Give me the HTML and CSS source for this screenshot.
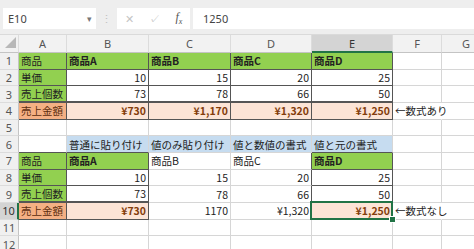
FILE: index.html
```html
<!DOCTYPE html>
<html lang="ja">
<head>
    <meta charset="UTF-8">
    <title>貼り付けの比較</title>
    <link rel="stylesheet" href="styles.css">
</head>
<body>
<div class="topbar">
    <div class="namebox"><span>E10</span><span class="caret">▾</span></div>
    <span class="dots">⋮</span>
    <div class="fbtns">
        <span class="cancel">✕</span>
        <span class="enter">✓</span>
        <span class="fx">f<sub>x</sub></span>
    </div>
    <div class="fbox">1250</div>
</div>

<div class="sheet">
    <!-- header row -->
    <div class="ch corner">
        <svg width="11" height="11" viewBox="0 0 11 11"><polygon points="11,0 11,11 0,11" fill="#b8b8b8"/></svg>
    </div>
    <div class="ch">A</div>
    <div class="ch">B</div>
    <div class="ch">C</div>
    <div class="ch">D</div>
    <div class="ch ch-sel">E</div>
    <div class="ch">F</div>
    <div class="ch">G</div>

    <!-- 1 -->
    <div class="rh">1</div>
    <div class="g dr db">商品</div>
    <div class="g b dr db">商品A</div>
    <div class="g b dr db">商品B</div>
    <div class="g b dr db">商品C</div>
    <div class="g b dr db">商品D</div>
    <div></div>
    <div></div>

    <!-- 2 -->
    <div class="rh">2</div>
    <div class="g dr db">単価</div>
    <div class="n dr db">10</div>
    <div class="n dr db">15</div>
    <div class="n dr db">20</div>
    <div class="n dr db">25</div>
    <div></div>
    <div></div>

    <!-- 3 -->
    <div class="rh">3</div>
    <div class="g dr tb">売上個数</div>
    <div class="n dr tb">73</div>
    <div class="n dr tb">78</div>
    <div class="n dr tb">66</div>
    <div class="n dr tb">50</div>
    <div></div>
    <div></div>

    <!-- 4 -->
    <div class="rh">4</div>
    <div class="o dr db">売上金額</div>
    <div class="lo n b dr db">¥730</div>
    <div class="lo n b dr db">¥1,170</div>
    <div class="lo n b dr db">¥1,320</div>
    <div class="lo n b dr db">¥1,250</div>
    <div class="ov">←数式あり</div>
    <div></div>

    <!-- 5 -->
    <div class="rh">5</div>
    <div></div>
    <div></div>
    <div></div>
    <div></div>
    <div></div>
    <div></div>
    <div></div>

    <!-- 6 -->
    <div class="rh">6</div>
    <div class="db"></div>
    <div class="bl db">普通に貼り付け</div>
    <div class="bl">値のみ貼り付け</div>
    <div class="bl">値と数値の書式</div>
    <div class="bl db">値と元の書式</div>
    <div></div>
    <div></div>

    <!-- 7 -->
    <div class="rh">7</div>
    <div class="g dr db">商品</div>
    <div class="g b dr db">商品A</div>
    <div>商品B</div>
    <div class="dr">商品C</div>
    <div class="g b dr db">商品D</div>
    <div></div>
    <div></div>

    <!-- 8 -->
    <div class="rh">8</div>
    <div class="g dr db">単価</div>
    <div class="n dr db">10</div>
    <div class="n">15</div>
    <div class="n dr">20</div>
    <div class="n dr db">25</div>
    <div></div>
    <div></div>

    <!-- 9 -->
    <div class="rh">9</div>
    <div class="g dr tb">売上個数</div>
    <div class="n dr tb">73</div>
    <div class="n">78</div>
    <div class="n dr">66</div>
    <div class="n dr">50</div>
    <div></div>
    <div></div>

    <!-- 10 -->
    <div class="rh rh-sel">10</div>
    <div class="o dr db">売上金額</div>
    <div class="lo n b dr db">¥730</div>
    <div class="n">1170</div>
    <div class="n">¥1,320</div>
    <div class="lo n b sel">¥1,250</div>
    <div class="ov">←数式なし</div>
    <div></div>

    <!-- 11 -->
    <div class="rh">11</div>
    <div></div>
    <div></div>
    <div></div>
    <div></div>
    <div></div>
    <div></div>
    <div></div>

    <!-- 12 -->
    <div class="rh">12</div>
    <div></div>
    <div></div>
    <div></div>
    <div></div>
    <div></div>
    <div></div>
    <div></div>
</div>
</body>
</html>
```

FILE: styles.css
```css
body {
    margin: 0;
    width: 474px;
    height: 249px;
    overflow: hidden;
    background: #fff;
    font-family: "Noto Sans CJK JP", "Noto Sans", sans-serif;
    color: #222;
}

/* formula bar */

.topbar {
    height: 35px;
    box-sizing: border-box;
    padding-top: 8px;
    display: flex;
    align-items: flex-start;
    background: #eeeeee;
    border-bottom: 1px solid #dadada;
    font-family: "Noto Sans", sans-serif;
    font-size: 11px;
    color: #444;
}

.namebox {
    margin-left: 3px;
    width: 93px;
    height: 21px;
    box-sizing: border-box;
    padding: 0 4px 0 5px;
    display: flex;
    align-items: center;
    justify-content: space-between;
    background: #fff;
}

.caret {
    font-size: 9px;
    color: #777;
}

.dots {
    width: 21px;
    line-height: 21px;
    text-align: center;
    color: #c0c0c0;
}

.fbtns {
    width: 73px;
    height: 21px;
    display: flex;
    align-items: center;
    justify-content: space-around;
    background: #fff;
}

.cancel,
.enter {
    color: #c4c4c4;
    font-size: 11px;
}

.fx {
    font-family: "Liberation Serif", serif;
    font-style: italic;
    color: #555;
    font-size: 12px;
}

.fx sub {
    font-size: 8px;
}

.fbox {
    margin-left: 3px;
    flex: 1;
    height: 21px;
    line-height: 21px;
    padding-left: 10px;
    background: #fff;
}

/* grid */

.sheet {
    display: grid;
    grid-template-columns: 19px 48px 82px 82px 81px 81px 49px 49px;
    grid-template-rows: 18px repeat(12, 16.67px);
}

.sheet > div {
    box-sizing: border-box;
    display: flex;
    align-items: center;
    padding: 0 2px;
    white-space: nowrap;
    font-size: 10.5px;
    border-right: 1px solid #d6d6d6;
    border-bottom: 1px solid #d6d6d6;
}

.sheet > .ch {
    justify-content: center;
    background: #f2f2f2;
    color: #555;
    font-family: "Noto Sans", sans-serif;
    font-size: 11px;
    border-right-color: #dcdcdc;
    border-bottom-color: #c4c4c4;
}

.sheet > .corner {
    justify-content: flex-end;
    align-items: flex-end;
    padding: 0 2px 4px 0;
}

.sheet > .ch-sel {
    background: #d4d4d4;
    color: #333;
    border-bottom: 2px solid #217346;
}

.sheet > .rh {
    justify-content: center;
    background: #f0f0f0;
    color: #555;
    font-family: "Noto Sans", sans-serif;
    font-size: 11px;
    border-right-color: #c4c4c4;
    border-bottom-color: #dcdcdc;
}

.sheet > .rh-sel {
    background: #d4d4d4;
    color: #333;
    border-right: 2px solid #217346;
}

/* cell formats */

.g { background: #92d050; }
.o { background: #f4b084; color: #5b2c0e; }
.lo { background: #fce4d6; color: #833c0b; }
.bl { background: #c6dcf0; }
.b { font-weight: bold; }
.sheet > .n { justify-content: flex-end; }

.sheet > .dr { border-right-color: #555; }
.sheet > .db { border-bottom-color: #555; }
.sheet > .tb { border-bottom: 2px solid #555; }
.sheet > .ov { border-right-color: transparent; }

/* active cell */

.sel {
    position: relative;
}

.sel::after {
    content: "";
    position: absolute;
    left: -2px;
    top: -2px;
    right: -1px;
    bottom: -1px;
    border: 2px solid #217346;
}

.sel::before {
    content: "";
    position: absolute;
    right: -4px;
    bottom: -4px;
    width: 5px;
    height: 5px;
    background: #217346;
    border: 1px solid #fff;
    z-index: 2;
}
```
